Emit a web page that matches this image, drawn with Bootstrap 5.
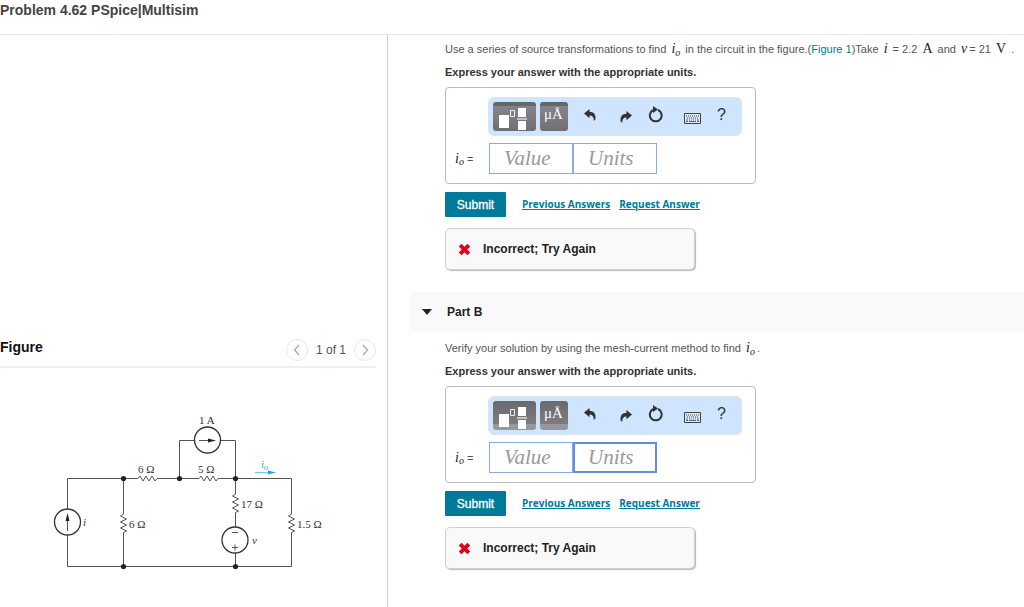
<!DOCTYPE html>
<html lang="en">
<head>
<meta charset="utf-8">
<meta name="viewport" content="width=device-width, initial-scale=1">
<title>Problem 4.62 PSpice|Multisim</title>
<link href="https://cdn.jsdelivr.net/npm/bootstrap@5.3.0/dist/css/bootstrap.min.css" rel="stylesheet">
<style>
  body { font-family: "Liberation Sans", Arial, sans-serif; font-size: 11px; line-height: 16px; color: #555; background: #fff; }
  h1, h2, h3, p { margin: 0; }
  .page-head { height: 35px; border-bottom: 1px solid #e6e6e6; }
  .page-head h1 { font-size: 14px; line-height: 20px; font-weight: 700; color: #444; }
  .figure-pane { width: 388px; border-right: 1px solid #c8cfe0; padding-right: 11px; }
  .problem-space { height: 300px; }
  .figure-head { height: 33px; border-bottom: 2px solid #efefef; }
  .figure-head h2 { font-size: 14px; line-height: 20px; font-weight: 700; color: #111; padding-top: 2px; }
  .pager { font-size: 12px; line-height: 22px; gap: 8px; }
  .pager span { padding-top: 4px; }
  .round-btn { width: 22px; height: 22px; padding: 0; border: 1px solid #e8e8e8; border-radius: 50%; background: #fff; display: flex; align-items: center; justify-content: center; }
  .circuit { display: block; margin-top: 32px; }
  .circuit text { font-family: "Liberation Serif", "Times New Roman", serif; font-size: 11px; fill: #333; }
  .work-pane { padding-left: 22px; min-width: 0; }
  .part-body { padding-left: 35px; }
  .prompt { padding-top: 6px; }
  .prompt .sym { margin: 0 2px; }
  .instruction { padding-top: 7px; font-weight: 700; color: #333; }
  .sym { font-family: "Liberation Serif", "Times New Roman", serif; font-size: 14px; line-height: 12px; color: #222; }
  .sym sub { font-size: 10px; }
  a { color: #007a99; }
  .answer-box { width: 311px; height: 97px; margin-top: 7px; border: 1px solid #bbb; border-radius: 4px; padding: 9px 13px 0 9px; }
  .tools { height: 39px; margin-left: 33px; background: #cfe5ff; border: 1px solid #dfe5ec; border-radius: 6px; padding: 0 4px; }
  .tools button { border: 0; background: none; padding: 0; color: #333; display: flex; align-items: center; justify-content: center; }
  .tools .key-btn { height: 29px; border-radius: 3px; background: linear-gradient(#66666a 0 15%, #85848a 15%, #6f6f73); }
  .tools .wide { width: 43px; }
  .tools .mu { width: 28px; margin-left: 4px; }
  .tools .keys { margin-left: 21px; }
  .part-b .key-btn { background: linear-gradient(#6a6a6e, #7c7b81 78%, #98979d 78%); }
  .entry { margin-top: 7px; }
  .entry label { width: 34px; }
  .entry input { width: 84px; height: 31px; border: 1px solid #8aa9e6; border-radius: 0; padding: 0 0 0 14px; font: italic 21px "Liberation Serif", "Times New Roman", serif; color: #333; background: #fff; outline: 0; }
  .entry input::placeholder { color: #999; opacity: 1; }
  .entry .focused { border: 2px solid #5f8de8; padding-left: 13px; }
  .submit { width: 61px; height: 25px; padding: 0; border: 0; border-radius: 1px; background: #007a99; color: #fff; font-size: 12px; line-height: 24px; font-weight: 400; -webkit-text-stroke: 0.3px #fff; }
  .submit:hover { background: #00657f; color: #fff; }
  .links { font: 700 10px/16px "Open Sans", sans-serif; gap: 9px; padding-bottom: 2px; }
  .feedback { width: 250px; height: 42px; margin-top: 11px; background: #f9f9f9; border: 1px solid #d0d0d0; border-radius: 5px; box-shadow: 1px 1px 1px #bbb; color: #222; font-size: 12px; font-weight: 700; padding-left: 12px; gap: 12px; }
  .part-head { height: 39px; margin-top: 22px; background: #f9f9f9; padding-left: 12px; gap: 15px; }
  .part-head h3 { font-size: 12px; line-height: 16px; font-weight: 700; color: #222; }
  .part-b .prompt { padding-top: 9px; }
</style>
</head>
<body>
<svg width="0" height="0" class="position-absolute" aria-hidden="true">
  <symbol id="template" viewBox="0 0 43 29">
    <path d="M6 13h10v13H6z" fill="#fff"/><path d="M17.500 8.500h4v6h-4z" fill="none" stroke="#eee"/>
    <path d="M25 6h8v9h-8zM25 19h8v9h-8z" fill="#fff"/><path d="M24 17h10" stroke="#ddd" stroke-width="1.500"/>
  </symbol>
  <symbol id="undo" viewBox="0 0 13 13">
    <path d="M0 5 6 0v3q7 0 6.500 8l-2 2Q11 7 6 7v3z" fill="#333"/>
  </symbol>
  <symbol id="reset" viewBox="0 0 15 17">
    <path d="M5.500 4a5.900 5.900 0 1 0 4.500 0" fill="none" stroke="#333" stroke-width="2"/><path d="M5 0l5 3.500L5 7z" fill="#333"/>
  </symbol>
  <symbol id="keyboard" viewBox="0 0 17 11">
    <path d="M.5.5h16v10H.5z" fill="#dbe9fb" stroke="#444"/><path d="M2 3h13M3 5h12" stroke="#444" stroke-dasharray="1 1"/><path d="M2 7h2m1 0h1m1 0h1m1 0h1m1 0h1m1 0h2M2 8.500h2m1 0h7m1 0h2" stroke="#667"/>
  </symbol>
  <symbol id="wrong" viewBox="0 0 12 12">
    <path d="M2 2l8 8M10 2l-8 8" stroke="#e0001b" stroke-width="3.600"/>
  </symbol>
</svg>

<div class="d-flex flex-column min-vh-100">
  <header class="page-head"><h1>Problem 4.62 PSpice|Multisim</h1></header>
  <div class="d-flex flex-grow-1">
    <aside class="figure-pane flex-shrink-0">
      <div class="problem-space"></div>
      <div class="figure-head d-flex justify-content-between">
        <h2>Figure</h2>
        <div class="pager d-flex">
          <button class="round-btn mt-1" type="button" aria-label="Previous figure"><svg width="8" height="12" viewBox="0 0 8 12"><path d="M6 1 1.500 6 6 11" fill="none" stroke="#aaa" stroke-width="1.300"/></svg></button>
          <span>1 of 1</span>
          <button class="round-btn mt-1" type="button" aria-label="Next figure"><svg width="8" height="12" viewBox="0 0 8 12"><path d="M2 1 6.500 6 2 11" fill="none" stroke="#aaa" stroke-width="1.300"/></svg></button>
        </div>
      </div>
      <svg class="circuit" width="376" height="180" viewBox="0 400 376 180" role="img" aria-label="Circuit diagram" id="figure1">
        <g fill="none" stroke="#555" stroke-width="1">
          <path d="M67.500 509V478.500H138l2-2.500 3 5 3-5 3 5 3-5 3 5 2-2.500H199l2-2.500 3 5 3-5 3 5 3-5 3 5 2-2.500H291.500V514l-3 2 6 3-6 3 6 3-6 3 6 3-3 1.500V566.500H67.500V535"/>
          <path d="M123.500 478.500V514l-3 2 6 3-6 3 6 3-6 3 6 3-3 1.500V566.500"/>
          <path d="M179.500 478.500V440.500H194M221 440.500H235.500V494l-3 2 6 3-6 3 6 3-6 3 6 3-3 1.500V527M235.500 553V566.500"/>
          <g stroke="#333" stroke-width="1.300"><circle cx="67.500" cy="522" r="13"/><circle cx="207.500" cy="440" r="13"/><circle cx="235" cy="540" r="13"/></g>
          <path d="M67.500 531v-12M199 440.500h10M232 532.500h6M232 547.500h6M235 544.500v6"/>
          <path d="M255 472.500h14" stroke="#70c8ed"/>
        </g>
        <g fill="#222"><circle cx="123.500" cy="478.500" r="2.600"/><circle cx="179.500" cy="478.500" r="2.600"/><circle cx="235.500" cy="478.500" r="2.600"/><circle cx="123.500" cy="566.500" r="2.600"/><circle cx="235.500" cy="566.500" r="2.600"/><path d="M67.500 513l2 8h-4zM216 440.500l-8-2v4z"/></g>
        <path d="M276 472.500l-8-2v4z" fill="#1ba8e0"/>
        <text x="199" y="424">1 A</text><text x="138" y="473">6 Ω</text><text x="198" y="473">5 Ω</text>
        <text x="129" y="528">6 Ω</text><text x="241" y="508">17 Ω</text><text x="297" y="528">1.5 Ω</text>
        <text x="83" y="526" font-style="italic">i</text><text x="252" y="544" font-style="italic">v</text>
        <text x="261" y="468" font-style="italic" style="fill:#1ba8e0">i<tspan font-size="8" dy="2">o</tspan></text>
      </svg>
    </aside>

    <main class="work-pane flex-grow-1">
      <section class="part-a">
        <div class="part-body">
          <p class="prompt">Use a series of source transformations to find <span class="sym"><i>i</i><sub><i>o</i></sub></span> in the circuit in the figure.(<a class="text-decoration-none" href="#figure1">Figure 1</a>)Take <i class="sym">i</i> = 2.2 <span class="sym">A</span> and <i class="sym">v</i>= 21 <span class="sym">V</span> .</p>
          <p class="instruction">Express your answer with the appropriate units.</p>
          <form class="answer-box">
            <div class="tools d-flex align-items-center">
              <button type="button" class="key-btn wide" aria-label="Templates"><svg width="43" height="29"><use href="#template"/></svg></button>
              <button type="button" class="key-btn mu" aria-label="Symbols"><svg width="28" height="29"><text x="4" y="17" font-family="Liberation Serif" font-size="15" fill="#fff">μÅ</text></svg></button>
              <button type="button" class="ms-3 mb-1" aria-label="Undo"><svg width="12" height="12"><use href="#undo"/></svg></button>
              <button type="button" class="ms-4" aria-label="Redo"><svg width="12" height="12" viewBox="0 0 13 13"><use href="#undo" width="13" height="13" transform="translate(13) scale(-1 1)"/></svg></button>
              <button type="button" class="ms-3 mb-1" aria-label="Reset"><svg width="15" height="17"><use href="#reset"/></svg></button>
              <button type="button" class="keys mt-1" aria-label="Keyboard"><svg width="17" height="11"><use href="#keyboard"/></svg></button>
              <button type="button" class="ms-3 mb-1 fs-6" aria-label="Help">?</button>
            </div>
            <div class="entry d-flex align-items-center">
              <label for="valueA"><span class="sym"><i>i</i><sub><i>o</i></sub></span> =</label>
              <input id="valueA" type="text" placeholder="Value"><input type="text" placeholder="Units" aria-label="Units">
            </div>
          </form>
          <div class="d-flex align-items-center mt-2">
            <button class="btn submit" type="button">Submit</button>
            <div class="links d-flex ms-3"><a href="#">Previous Answers</a><a href="#">Request Answer</a></div>
          </div>
          <div class="feedback d-flex align-items-center" role="status"><svg width="13" height="13"><use href="#wrong"/></svg>Incorrect; Try Again</div>
        </div>
      </section>

      <section class="part-b">
        <div class="part-head d-flex align-items-center"><svg width="10" height="6" viewBox="0 0 10 6"><path d="M0 0h10L5 6z" fill="#222"/></svg><h3>Part B</h3></div>
        <div class="part-body">
          <p class="prompt">Verify your solution by using the mesh-current method to find <span class="sym"><i>i</i><sub><i>o</i></sub></span>.</p>
          <p class="instruction">Express your answer with the appropriate units.</p>
          <form class="answer-box">
            <div class="tools d-flex align-items-center">
              <button type="button" class="key-btn wide" aria-label="Templates"><svg width="43" height="29"><use href="#template"/></svg></button>
              <button type="button" class="key-btn mu" aria-label="Symbols"><svg width="28" height="29"><text x="4" y="17" font-family="Liberation Serif" font-size="15" fill="#fff">μÅ</text></svg></button>
              <button type="button" class="ms-3 mb-1" aria-label="Undo"><svg width="12" height="12"><use href="#undo"/></svg></button>
              <button type="button" class="ms-4" aria-label="Redo"><svg width="12" height="12" viewBox="0 0 13 13"><use href="#undo" width="13" height="13" transform="translate(13) scale(-1 1)"/></svg></button>
              <button type="button" class="ms-3 mb-1" aria-label="Reset"><svg width="15" height="17"><use href="#reset"/></svg></button>
              <button type="button" class="keys mt-1" aria-label="Keyboard"><svg width="17" height="11"><use href="#keyboard"/></svg></button>
              <button type="button" class="ms-3 mb-1 fs-6" aria-label="Help">?</button>
            </div>
            <div class="entry d-flex align-items-center">
              <label for="valueB"><span class="sym"><i>i</i><sub><i>o</i></sub></span> =</label>
              <input id="valueB" type="text" placeholder="Value"><input class="focused" type="text" placeholder="Units" aria-label="Units">
            </div>
          </form>
          <div class="d-flex align-items-center mt-2">
            <button class="btn submit" type="button">Submit</button>
            <div class="links d-flex ms-3"><a href="#">Previous Answers</a><a href="#">Request Answer</a></div>
          </div>
          <div class="feedback d-flex align-items-center" role="status"><svg width="13" height="13"><use href="#wrong"/></svg>Incorrect; Try Again</div>
        </div>
      </section>
    </main>
  </div>
</div>
<script src="https://cdn.jsdelivr.net/npm/bootstrap@5.3.0/dist/js/bootstrap.bundle.min.js"></script>
</body>
</html>
